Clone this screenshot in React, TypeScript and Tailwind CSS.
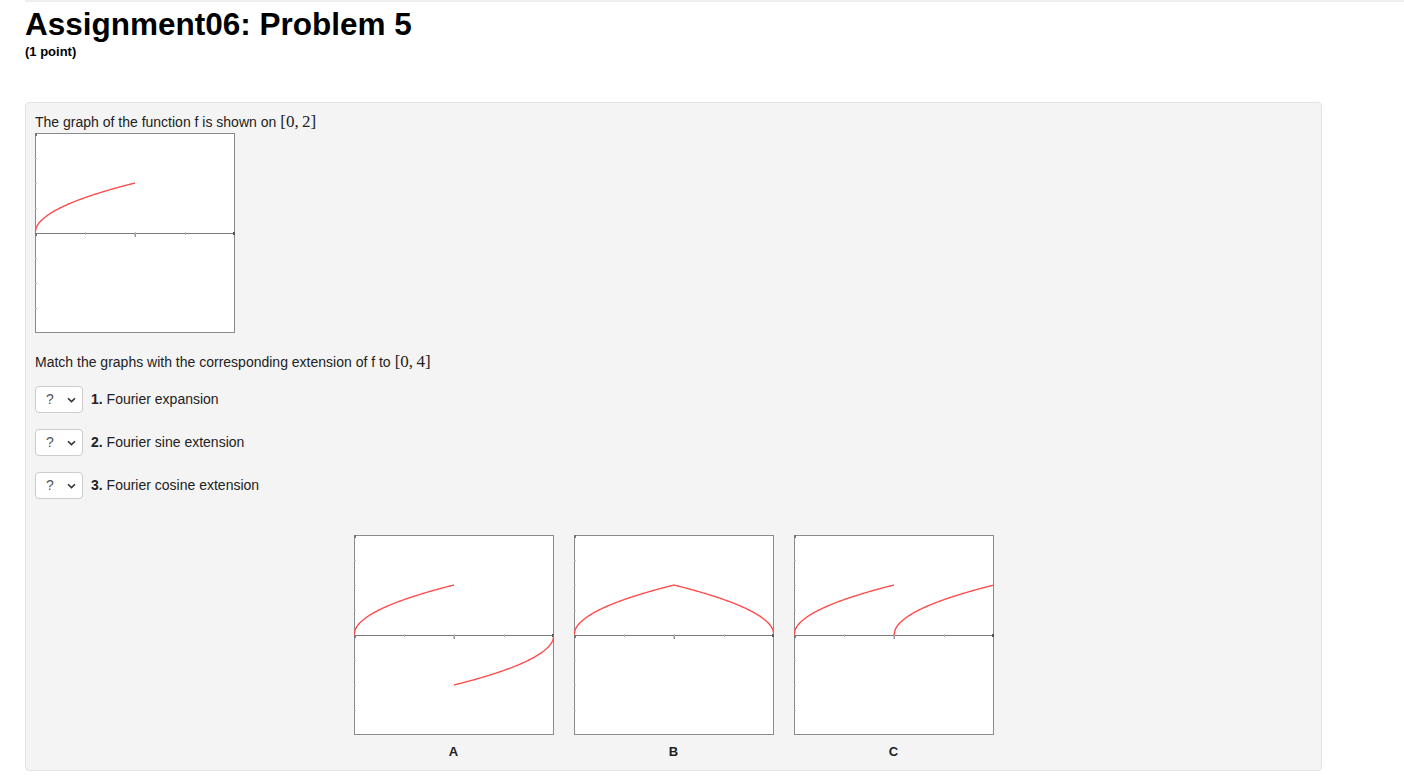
import React from "react"

// plot coords: x in [0,4] -> 0..200, y in [-4,4] -> 200..0
function path(f: (x: number) => number, a: number, b: number) {
  const pts: string[] = []
  const n = 80
  for (let i = 0; i <= n; i++) {
    const x = a + ((b - a) * i) / n
    const y = f(x)
    pts.push(`${(x * 50).toFixed(2)},${(100 - y * 25).toFixed(2)}`)
  }
  return pts.join(" ")
}

const s = (x: number) => Math.sqrt(Math.max(0, 2 * x))

type Piece = { f: (x: number) => number; a: number; b: number }

function Plot({ pieces }: { pieces: Piece[] }) {
  return (
    <svg width="200" height="200" viewBox="0 0 200 200" className="block">
      <rect x="0.5" y="0.5" width="199" height="199" fill="#ffffff" stroke="#8a8a8a" strokeWidth="1" />
      <line x1="0" y1="100.5" x2="200" y2="100.5" stroke="#7a7a7a" strokeWidth="1" />
      {[50, 100, 150].map((x) => (
        <line key={x} x1={x + 0.5} y1="99" x2={x + 0.5} y2="102" stroke="#bbbbbb" strokeWidth="1" />
      ))}
      {[25, 50, 75, 125, 150, 175].map((y) => (
        <line key={y} x1="0" y1={y + 0.5} x2="2" y2={y + 0.5} stroke="#bbbbbb" strokeWidth="1" />
      ))}
      <rect x="0" y="0" width="2" height="3" fill="#777" />
      <rect x="0" y="100" width="2" height="3" fill="#777" />
      <rect x="99.5" y="101" width="1.5" height="3" fill="#999" />
      <rect x="198" y="99" width="2" height="3" fill="#555" />
      {pieces.map((p, i) => (
        <polyline
          key={i}
          points={path(p.f, p.a, p.b)}
          fill="none"
          stroke="#ff4d4d"
          strokeWidth="1.4"
          strokeLinejoin="round"
        />
      ))}
    </svg>
  )
}

function Sel() {
  return (
    <div className="flex h-[27px] w-[48px] items-center justify-between rounded-[4px] border border-[#cccccc] bg-white pl-[10px] pr-[6px]">
      <span className="text-[14px] text-[#555]">?</span>
      <svg width="9" height="6" viewBox="0 0 9 6">
        <path d="M1 1.2 L4.5 4.6 L8 1.2" fill="none" stroke="#333" strokeWidth="1.6" />
      </svg>
    </div>
  )
}

function Interval({ a, b }: { a: string; b: string }) {
  return (
    <span className="ml-[4px] font-['Liberation_Serif',serif] text-[17px]">
      [{a},&thinsp;{b}]
    </span>
  )
}

export default function App() {
  const f0 = { f: s, a: 0, b: 2 }
  const items = [
    { n: "1.", t: "Fourier expansion" },
    { n: "2.", t: "Fourier sine extension" },
    { n: "3.", t: "Fourier cosine extension" },
  ]
  const graphs: { label: string; pieces: Piece[] }[] = [
    { label: "A", pieces: [f0, { f: (x) => -s(4 - x), a: 2, b: 4 }] },
    { label: "B", pieces: [f0, { f: (x) => s(4 - x), a: 2, b: 4 }] },
    { label: "C", pieces: [f0, { f: (x) => s(x - 2), a: 2, b: 4 }] },
  ]

  return (
    <div className="min-h-[784px] bg-white font-['Liberation_Sans',Arial,sans-serif] text-black">
      <div className="ml-[25px] h-[2px] bg-[#eeeeee]" />
      <div className="ml-[25px] w-[1297px]">
        <h1 className="mt-[4px] text-[31.5px] font-bold leading-[36px]">Assignment06: Problem 5</h1>
        <div className="mt-[2px] text-[13px] font-bold leading-[16px]">(1 point)</div>

        <div className="mt-[42px] rounded-[4px] border border-[#e3e3e3] bg-[#f4f4f4] px-[9px] pb-[10px] pt-[8px] text-[14px] text-[#222]">
          <div className="flex h-[22px] items-center">
            The graph of the function f is shown on <Interval a="0" b="2" />
          </div>
          <div>
            <Plot pieces={[f0]} />
          </div>

          <div className="mt-[18px] flex h-[22px] items-center">
            Match the graphs with the corresponding extension of f to <Interval a="0" b="4" />
          </div>

          <div className="mt-[13px] flex flex-col gap-[16px]">
            {items.map((it) => (
              <div key={it.n} className="flex items-center gap-[8px]">
                <Sel />
                <span>
                  <b>{it.n}</b> {it.t}
                </span>
              </div>
            ))}
          </div>

          <div className="mt-[36px] flex justify-center gap-[20px]">
            {graphs.map((g) => (
              <div key={g.label} className="flex flex-col items-center">
                <Plot pieces={g.pieces} />
                <div className="mt-[9px] text-[13px] font-bold leading-[16px]">{g.label}</div>
              </div>
            ))}
          </div>
        </div>
      </div>
    </div>
  )
}
